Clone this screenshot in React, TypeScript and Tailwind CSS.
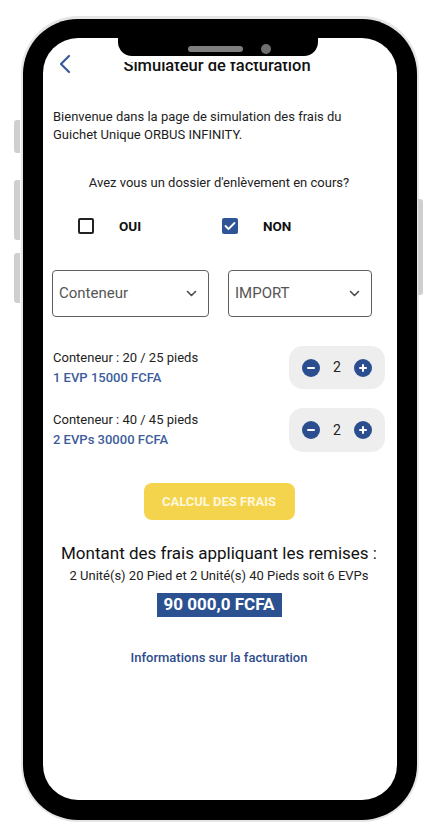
import React from "react";

const Chevron = () => (
  <svg width="11" height="7" viewBox="0 0 11 7" fill="none">
    <polyline points="1.5,1.5 5.5,5.5 9.5,1.5" stroke="#4a4a4a" strokeWidth="1.6" strokeLinecap="round" strokeLinejoin="round" />
  </svg>
);

const Minus = () => (
  <div className="w-[18px] h-[18px] rounded-full bg-[#2b4f8e] flex items-center justify-center">
    <div className="w-[8px] h-[2px] bg-white rounded-full" />
  </div>
);

const Plus = () => (
  <div className="w-[18px] h-[18px] rounded-full bg-[#2b4f8e] flex items-center justify-center">
    <svg width="8" height="8" viewBox="0 0 8 8">
      <rect x="3" y="0" width="2" height="8" rx="1" fill="white" />
      <rect x="0" y="3" width="8" height="2" rx="1" fill="white" />
    </svg>
  </div>
);

const Row = ({ top, label, sub, mt }: { top?: boolean; label: string; sub: string; mt: string }) => (
  <div className={`flex items-center justify-between ${mt}`}>
    <div className="flex flex-col">
      <span className="text-[13px] leading-[20px] text-[#222]">{label}</span>
      <span className="text-[13px] leading-[20px] font-medium text-[#3d5d9c]">{sub}</span>
    </div>
    <div className={`${top ? "h-[43px]" : "h-[44px]"} w-[96px] rounded-[14px] bg-[#eeeeee] flex items-center pl-[13px]`}>
      <Minus />
      <span className="w-[34px] text-center text-[14px] text-[#222]">2</span>
      <Plus />
    </div>
  </div>
);

export default function App() {
  return (
    <div className="relative w-[438px] h-[836px] bg-white overflow-hidden" style={{ fontFamily: "Roboto, 'Noto Sans', sans-serif" }}>
      {/* side buttons */}
      <div className="absolute left-[14px] top-[120px] w-[6px] h-[33px] rounded-l-[3px] bg-[#cfcfcf]" />
      <div className="absolute left-[14px] top-[180px] w-[6px] h-[60px] rounded-l-[3px] bg-[#cfcfcf]" />
      <div className="absolute left-[14px] top-[253px] w-[6px] h-[50px] rounded-l-[3px] bg-[#cfcfcf]" />
      <div className="absolute left-[418px] top-[199px] w-[5px] h-[96px] rounded-r-[3px] bg-[#cfcfcf]" />

      <div className="ml-[21px] mt-[16px] w-[398px] h-[806px] rounded-[57px] bg-[#e6e6e6] pt-[3px] px-[2px] pb-[2px]">
        <div className="relative w-full h-full rounded-[55px] bg-black px-[20px] pt-[19px] pb-[20px]">
          {/* notch */}
          <div className="absolute left-[95px] top-0 w-[200px] h-[37px] bg-black rounded-b-[14px] z-10">
            <div className="absolute left-[70px] top-[27px] w-[55px] h-[6px] rounded-full bg-[#7f7f7f]" />
            <div className="absolute left-[143px] top-[25px] w-[10px] h-[10px] rounded-full bg-[#6f6f6f]" />
          </div>

          <div className="w-full h-full rounded-[35px] bg-white overflow-hidden flex flex-col pl-[10px] pr-[12px]">
            {/* header */}
            <div className="mt-[14px] h-[24px] grid grid-cols-[24px_1fr_28px] items-start">
              <div className="h-[24px] flex items-center pl-[6px]">
                <svg width="12" height="20" viewBox="0 0 12 20" fill="none">
                  <polyline points="10,2 2,10 10,18" stroke="#3a5a96" strokeWidth="2.2" strokeLinecap="round" strokeLinejoin="round" />
                </svg>
              </div>
              <div className="mt-[10px] h-[10px] overflow-hidden">
                <div className="-mt-[5px] text-center text-[16.5px] leading-[18px] font-medium text-[#111]">Simulateur de facturation</div>
              </div>
              <div />
            </div>

            <p className="mt-[32px] text-[13px] leading-[18px] text-[#1e1e1e]">
              Bienvenue dans la page de simulation des frais du Guichet Unique ORBUS INFINITY.
            </p>

            <p className="mt-[30px] text-center text-[13px] leading-[18px] text-[#222]">
              Avez vous un dossier d'enlèvement en cours?
            </p>

            <div className="mt-[25px] h-[18px] flex items-center pl-[25px]">
              <div className="w-[144px] flex items-center gap-[25px]">
                <div className="w-[16px] h-[16px] border-2 border-[#222] rounded-[2px]" />
                <span className="text-[13.5px] font-bold text-[#111]">OUI</span>
              </div>
              <div className="flex items-center gap-[25px]">
                <div className="w-[16px] h-[16px] rounded-[2px] bg-[#2f5597] flex items-center justify-center">
                  <svg width="12" height="10" viewBox="0 0 12 10" fill="none">
                    <polyline points="1.5,5 4.5,8 10.5,2" stroke="white" strokeWidth="1.8" strokeLinecap="round" strokeLinejoin="round" />
                  </svg>
                </div>
                <span className="text-[13.5px] font-bold text-[#111]">NON</span>
              </div>
            </div>

            <div className="mt-[35px] -ml-[1px] flex gap-[19px]">
              <div className="w-[157px] h-[47px] border-[1.5px] border-[#5f5f5f] rounded-[4px] flex items-center justify-between pl-[6px] pr-[11px]">
                <span className="text-[15px] text-[#555]">Conteneur</span>
                <Chevron />
              </div>
              <div className="w-[144px] h-[47px] border-[1.5px] border-[#5f5f5f] rounded-[4px] flex items-center justify-between pl-[6px] pr-[11px]">
                <span className="text-[15px] text-[#555]">IMPORT</span>
                <Chevron />
              </div>
            </div>

            <Row top label="Conteneur : 20 / 25 pieds" sub="1 EVP 15000 FCFA" mt="mt-[29px]" />
            <Row label="Conteneur : 40 / 45 pieds" sub="2 EVPs 30000 FCFA" mt="mt-[19px]" />

            <div className="mt-[31px] mx-auto w-[151px] h-[37px] rounded-[8px] bg-[#f5d44d] flex items-center justify-center">
              <span className="text-[13px] font-bold text-[#fff7dc]">CALCUL DES FRAIS</span>
            </div>

            <p className="mt-[22px] text-center text-[17px] leading-[22px] text-[#111]">
              Montant des frais appliquant les remises :
            </p>
            <p className="mt-[3px] text-center text-[13px] leading-[18px] text-[#222] whitespace-nowrap">
              2 Unité(s) 20 Pied et 2 Unité(s) 40 Pieds soit 6 EVPs
            </p>
            <div className="mt-[8px] mx-auto w-[125px] h-[24px] bg-[#2c5191] flex items-center justify-center">
              <span className="text-[17px] font-bold text-white">90 000,0 FCFA</span>
            </div>

            <p className="mt-[32px] text-center text-[13px] leading-[18px] font-medium text-[#2e4b8c]">
              Informations sur la facturation
            </p>
          </div>
        </div>
      </div>
    </div>
  );
}
